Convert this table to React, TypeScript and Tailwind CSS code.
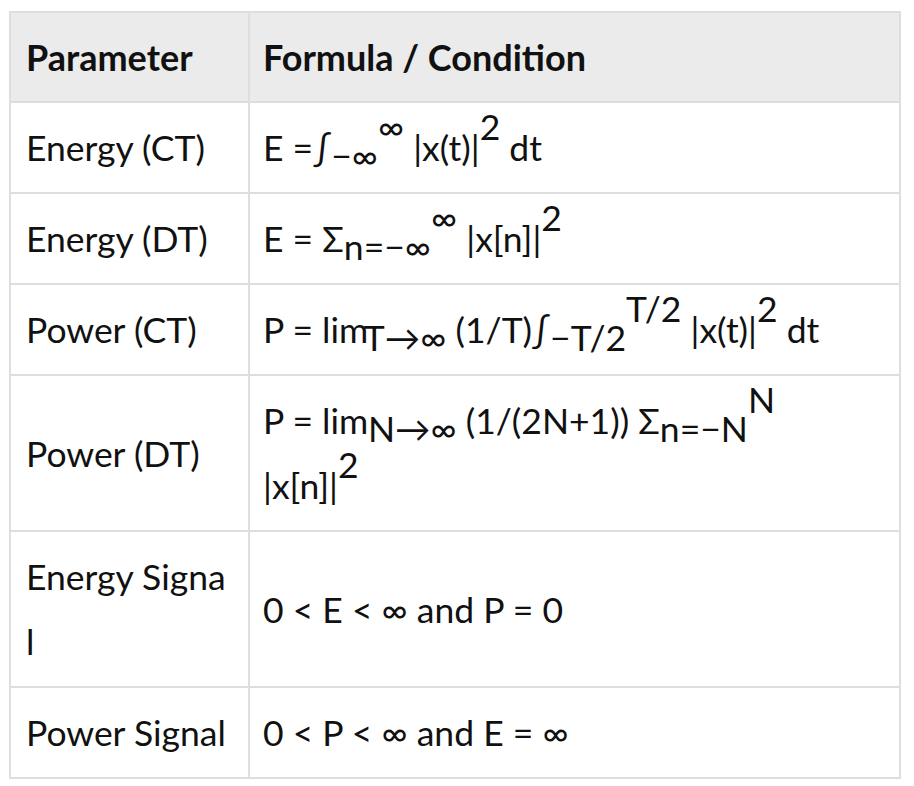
import React from "react";

const Sub = ({ children }: { children: React.ReactNode }) => (
  <sub className="text-[1em] -bottom-[0.22em]">{children}</sub>
);
const Sup = ({ children }: { children: React.ReactNode }) => (
  <sup className="text-[1em] -top-[0.6em]">{children}</sup>
);

const rows: { p: React.ReactNode; f: React.ReactNode }[] = [
  {
    p: "Energy (CT)",
    f: (
      <>
        E =∫<Sub>−∞</Sub>
        <Sup>∞</Sup> |x(t)|<Sup>2</Sup> dt
      </>
    ),
  },
  {
    p: "Energy (DT)",
    f: (
      <>
        E = Σ<Sub>n=−∞</Sub>
        <Sup>∞</Sup> |x[n]|<Sup>2</Sup>
      </>
    ),
  },
  {
    p: "Power (CT)",
    f: (
      <>
        P = lim<Sub>T→∞</Sub> (1/T)∫<Sub>−T/2</Sub>
        <Sup>T/2</Sup> |x(t)|<Sup>2</Sup> dt
      </>
    ),
  },
  {
    p: "Power (DT)",
    f: (
      <>
        P = lim<Sub>N→∞</Sub> (1/(2N+1)) Σ<Sub>n=−N</Sub>
        <Sup>N</Sup>
        <br />
        |x[n]|<Sup>2</Sup>
      </>
    ),
  },
  { p: "Energy Signal", f: "0 < E < ∞ and P = 0" },
  { p: "Power Signal", f: "0 < P < ∞ and E = ∞" },
];

export default function App() {
  return (
    <div className="bg-white min-h-[786px] pt-[11px] pl-[9px] font-['Lato',sans-serif] text-[#111]">
      <table className="table-fixed border-collapse w-[892px] text-[35.5px] leading-[65px]">
        <colgroup>
          <col className="w-[239px]" />
          <col />
        </colgroup>
        <thead>
          <tr className="bg-[#ebebeb]">
            <th className="border-2 border-[#dedede] text-left text-[36px] leading-[64px] font-bold px-[15px] py-[12px] align-middle">
              Parameter
            </th>
            <th className="border-2 border-[#dedede] text-left text-[36px] leading-[64px] font-bold px-[13px] py-[12px] align-middle">
              Formula / Condition
            </th>
          </tr>
        </thead>
        <tbody>
          {rows.map((r, i) => (
            <tr key={i}>
              <td className="border-2 border-[#dedede] px-[15px] py-[12px] align-middle break-all">
                {r.p}
              </td>
              <td className="border-2 border-[#dedede] px-[13px] py-[12px] align-middle">
                {r.f}
              </td>
            </tr>
          ))}
        </tbody>
      </table>
    </div>
  );
}
